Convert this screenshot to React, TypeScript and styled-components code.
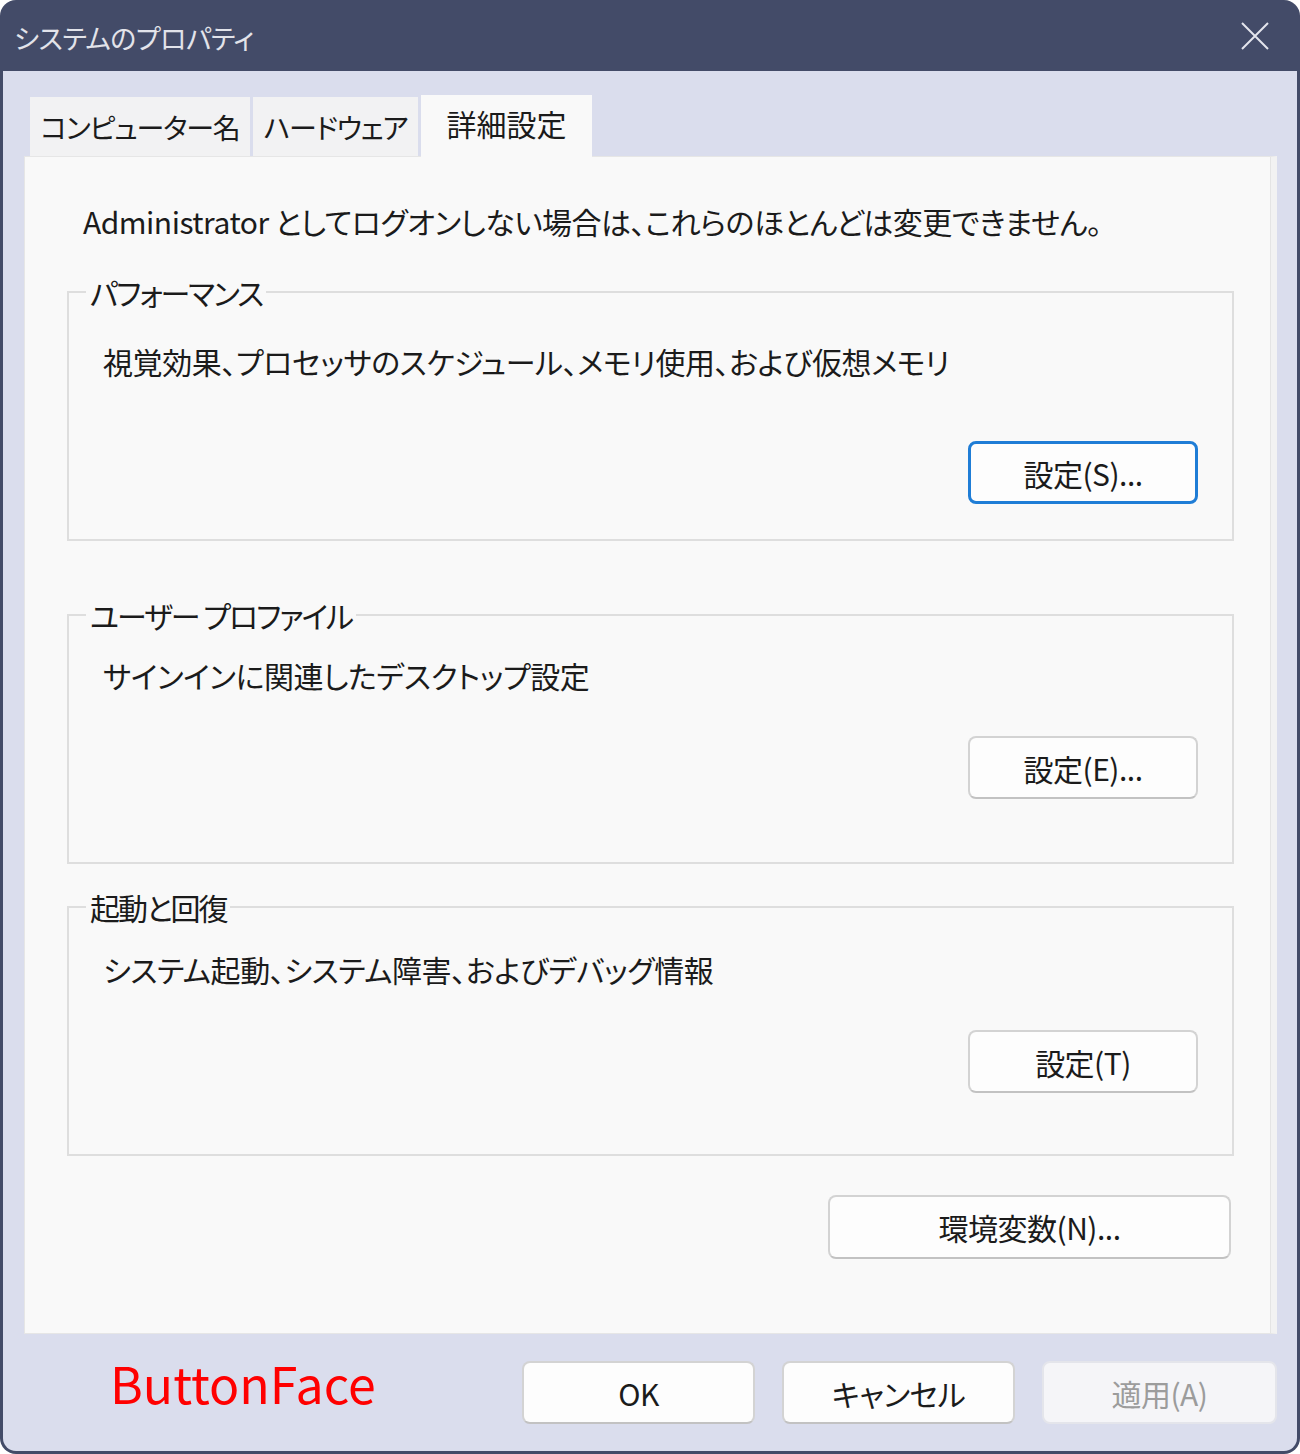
import styled, { createGlobalStyle, css } from "styled-components";

const GlobalStyle = createGlobalStyle`
  html, body {
    margin: 0;
    padding: 0;
    background: #ffffff;
  }
  body {
    font-family: "Noto Sans CJK JP", "Noto Sans", sans-serif;
  }
`;

const Window = styled.div`
  width: 1300px;
  height: 1454px;
  box-sizing: border-box;
  padding: 0 3px 3px;
  background: #434b68;
  border-radius: 16px;
  display: flex;
  flex-direction: column;
  overflow: hidden;
  font-feature-settings: "palt" 1;
  letter-spacing: -0.5px;
  color: #1b1b1b;
`;

const TitleBar = styled.div`
  height: 71px;
  flex-shrink: 0;
  display: flex;
  align-items: center;
  justify-content: space-between;
  padding: 0 27px 0 11px;
`;

const Title = styled.span`
  font-size: 27px;
  color: #e2e3ea;
  margin-top: 4px;
`;

const CloseIcon = () => (
  <svg width="30" height="30" viewBox="0 0 30 30" aria-hidden>
    <path d="M2 2 L28 28 M28 2 L2 28" stroke="#e4e5ec" strokeWidth="2" fill="none" />
  </svg>
);

const Body = styled.div`
  flex: 1;
  background: #dadded;
  border-radius: 0 0 13px 13px;
  display: flex;
  flex-direction: column;
  padding: 24px 20px 0 21px;
`;

const TabRow = styled.div`
  display: flex;
  align-items: flex-end;
  gap: 3px;
  height: 62px;
  margin-left: 6px;
  margin-bottom: -1px;
`;

const Tab = styled.div<{ $active?: boolean; $width: number }>`
  width: ${(p) => p.$width}px;
  height: 60px;
  box-sizing: border-box;
  display: flex;
  align-items: center;
  justify-content: center;
  white-space: nowrap;
  font-size: 28px;
  letter-spacing: -1.2px;
  background: #f2f2f3;
  ${(p) =>
    p.$active &&
    css`
      position: relative;
      z-index: 1;
      height: 62px;
      padding-bottom: 6px;
      font-size: 30px;
      letter-spacing: 0;
      background: #f9f9f9;
    `}
`;

const Panel = styled.div`
  height: 1178px;
  box-sizing: border-box;
  background: #f9f9f9;
  border: 1px solid #e6e6e6;
  border-right: 6px solid #f2f2f2;
  box-shadow: inset -1px 0 0 #e4e4e4;
  padding: 44px 37px 0 42px;
  display: flex;
  flex-direction: column;
`;

const Notice = styled.div`
  font-size: 30px;
  line-height: 40px;
  margin: 0 0 33px 16px;
`;

const Group = styled.fieldset`
  margin: 0;
  min-width: 0;
  height: 267px;
  box-sizing: border-box;
  padding: 0 34px;
  border: 2px solid #dedede;
  display: flex;
  flex-direction: column;
`;

const GroupGap = styled.div<{ $size: number }>`
  height: ${(p) => p.$size}px;
  flex-shrink: 0;
`;

const Legend = styled.legend`
  font-size: 30px;
  line-height: 36px;
  padding: 0 4px;
  margin-left: -17px;
  letter-spacing: -2px;
`;

const GroupText = styled.div<{ $top: number }>`
  font-size: 30px;
  line-height: 40px;
  margin-top: ${(p) => p.$top}px;
  letter-spacing: -0.4px;
`;

const Button = styled.button<{ $width: number; $focused?: boolean; $disabled?: boolean }>`
  width: ${(p) => p.$width}px;
  height: 63px;
  box-sizing: border-box;
  flex-shrink: 0;
  font-family: inherit;
  font-feature-settings: "palt" 1;
  letter-spacing: -0.5px;
  font-size: 30px;
  color: #1b1b1b;
  background: #fdfdfd;
  border: 2px solid #d3d3d3;
  border-bottom-color: #c2c2c2;
  border-radius: 8px;
  padding: 0;
  display: flex;
  align-items: center;
  justify-content: center;
  ${(p) =>
    p.$focused &&
    css`
      border: 3px solid #1f7dd6;
    `}
  ${(p) =>
    p.$disabled &&
    css`
      background: #f5f5f8;
      border-color: #e4e5eb;
      color: #9c9c9c;
    `}
`;

const GroupButton = styled(Button)<{ $top: number }>`
  align-self: flex-end;
  margin-top: ${(p) => p.$top}px;
`;

const EnvButton = styled(Button)`
  align-self: flex-end;
  height: 64px;
  margin: 39px 3px 0 0;
`;

const Footer = styled.div`
  display: flex;
  align-items: center;
  gap: 27px;
  height: 63px;
  margin-top: 27px;
`;

const ColorName = styled.span`
  font-size: 50px;
  line-height: 63px;
  letter-spacing: 0;
  color: #ff0000;
  margin: 0 auto 0 86px;
  position: relative;
  top: -10px;
`;

type GroupInfo = {
  legend: string;
  text: string;
  button: string;
  textTop: number;
  buttonTop: number;
  focused?: boolean;
  gapAfter: number;
};

const groups: GroupInfo[] = [
  {
    legend: "パフォーマンス",
    text: "視覚効果、プロセッサのスケジュール、メモリ使用、および仮想メモリ",
    button: "設定(S)...",
    textTop: 31,
    buttonTop: 60,
    focused: true,
    gapAfter: 56,
  },
  {
    legend: "ユーザー プロファイル",
    text: "サインインに関連したデスクトップ設定",
    button: "設定(E)...",
    textTop: 22,
    buttonTop: 41,
    gapAfter: 25,
  },
  {
    legend: "起動と回復",
    text: "システム起動、システム障害、およびデバッグ情報",
    button: "設定(T)",
    textTop: 24,
    buttonTop: 41,
    gapAfter: 0,
  },
];

export default function App() {
  return (
    <>
      <GlobalStyle />
      <Window>
        <TitleBar>
          <Title>システムのプロパティ</Title>
          <CloseIcon />
        </TitleBar>
        <Body>
          <TabRow>
            <Tab $width={220}>コンピューター名</Tab>
            <Tab $width={165}>ハードウェア</Tab>
            <Tab $width={171} $active>
              詳細設定
            </Tab>
          </TabRow>
          <Panel>
            <Notice>
              Administrator としてログオンしない場合は、これらのほとんどは変更できません。
            </Notice>
            {groups.map((g) => (
              <div key={g.legend}>
                <Group>
                  <Legend>{g.legend}</Legend>
                  <GroupText $top={g.textTop}>{g.text}</GroupText>
                  <GroupButton $width={230} $top={g.buttonTop} $focused={g.focused}>
                    {g.button}
                  </GroupButton>
                </Group>
                <GroupGap $size={g.gapAfter} />
              </div>
            ))}
            <EnvButton $width={403}>環境変数(N)...</EnvButton>
          </Panel>
          <Footer>
            <ColorName>ButtonFace</ColorName>
            <Button $width={233}>OK</Button>
            <Button $width={233}>キャンセル</Button>
            <Button $width={235} $disabled>
              適用(A)
            </Button>
          </Footer>
        </Body>
      </Window>
    </>
  );
}
